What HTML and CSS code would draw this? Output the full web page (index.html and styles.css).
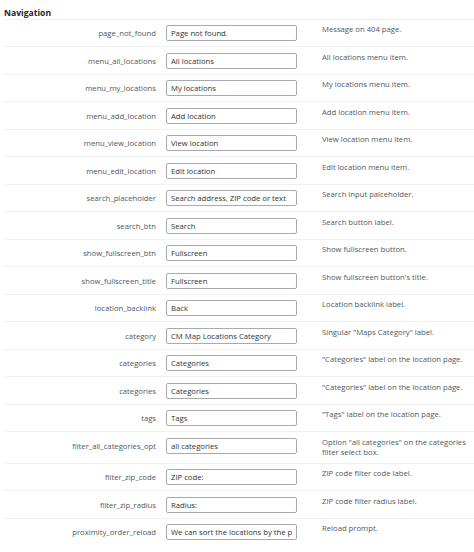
FILE: index.html
```html
<!DOCTYPE html>
<html>
<head>
<meta charset="utf-8">
<link rel="stylesheet" href="styles.css">
</head>
<body>
<h2 class="title">Navigation</h2>
<div class="table">
  <div class="row"><div class="label">page_not_found</div><div class="field"><input class="input" value="Page not found."></div><div class="desc">Message on 404 page.</div></div>
  <div class="row"><div class="label">menu_all_locations</div><div class="field"><input class="input" value="All locations"></div><div class="desc">All locations menu item.</div></div>
  <div class="row"><div class="label">menu_my_locations</div><div class="field"><input class="input" value="My locations"></div><div class="desc">My locations menu item.</div></div>
  <div class="row"><div class="label">menu_add_location</div><div class="field"><input class="input" value="Add location"></div><div class="desc">Add location menu item.</div></div>
  <div class="row"><div class="label">menu_view_location</div><div class="field"><input class="input" value="View location"></div><div class="desc">View location menu item.</div></div>
  <div class="row"><div class="label">menu_edit_location</div><div class="field"><input class="input" value="Edit location"></div><div class="desc">Edit location menu item.</div></div>
  <div class="row"><div class="label">search_placeholder</div><div class="field"><input class="input" value="Search address, ZIP code or text"></div><div class="desc">Search input palceholder.</div></div>
  <div class="row"><div class="label">search_btn</div><div class="field"><input class="input" value="Search"></div><div class="desc">Search button label.</div></div>
  <div class="row"><div class="label">show_fullscreen_btn</div><div class="field"><input class="input" value="Fullscreen"></div><div class="desc">Show fullscreen button.</div></div>
  <div class="row"><div class="label">show_fullscreen_title</div><div class="field"><input class="input" value="Fullscreen"></div><div class="desc">Show fullscreen button's title.</div></div>
  <div class="row"><div class="label">location_backlink</div><div class="field"><input class="input" value="Back"></div><div class="desc">Location backlink label.</div></div>
  <div class="row"><div class="label">category</div><div class="field"><input class="input" value="CM Map Locations Category"></div><div class="desc">Singular "Maps Category" label.</div></div>
  <div class="row"><div class="label">categories</div><div class="field"><input class="input" value="Categories"></div><div class="desc">"Categories" label on the location page.</div></div>
  <div class="row"><div class="label">categories</div><div class="field"><input class="input" value="Categories"></div><div class="desc">"Categories" label on the location page.</div></div>
  <div class="row"><div class="label">tags</div><div class="field"><input class="input" value="Tags"></div><div class="desc">"Tags" label on the location page.</div></div>
  <div class="row"><div class="label">filter_all_categories_opt</div><div class="field"><input class="input" value="all categories"></div><div class="desc">Option "all categories" on the categories filter select box.</div></div>
  <div class="row"><div class="label">filter_zip_code</div><div class="field"><input class="input" value="ZIP code:"></div><div class="desc">ZIP code filter code label.</div></div>
  <div class="row"><div class="label">filter_zip_radius</div><div class="field"><input class="input" value="Radius:"></div><div class="desc">ZIP code filter radius label.</div></div>
  <div class="row"><div class="label">proximity_order_reload</div><div class="field"><input class="input" value="We can sort the locations by the proximity to you"></div><div class="desc">Reload prompt.</div></div>
</div>
</body>
</html>
```

FILE: styles.css
```css
html, body {
  margin: 0;
  padding: 0;
  background: #ffffff;
  font-family: "Open Sans", "Noto Sans", sans-serif;
  font-size: 7.7px;
  color: #3c434a;
}

.title {
  margin: 0;
  padding: 0 0 0 4px;
  height: 19px;
  line-height: 26px;
  font-size: 8.6px;
  font-weight: 700;
  color: #1d2327;
  box-sizing: border-box;
}

.table {
  margin-left: 5px;
}

.row {
  display: grid;
  grid-template-columns: 161px 156px 1fr;
  align-items: start;
  border-top: 1px solid #f0f0f1;
  padding: 5.3px 0 5.2px 0;
}

.label {
  text-align: right;
  padding-right: 10px;
  line-height: 16px;
  color: #50575e;
  white-space: nowrap;
}

.input {
  display: block;
  box-sizing: border-box;
  width: 131px;
  height: 16px;
  margin: 0;
  padding: 0 4px;
  border: 1px solid #a7aaad;
  border-radius: 2px;
  font-family: inherit;
  font-size: 7.7px;
  color: #2c3338;
  background: #fff;
  outline: none;
}

.desc {
  margin-top: -1px;
  line-height: 10.5px;
  color: #50575e;
  padding-right: 8px;
}
```
